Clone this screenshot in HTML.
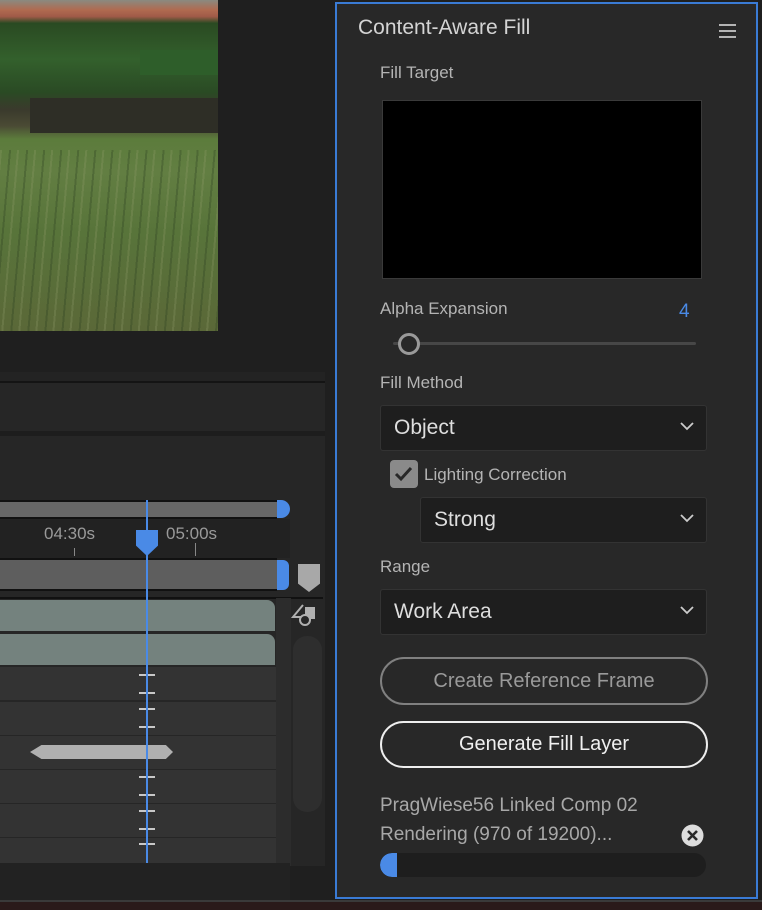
<!DOCTYPE html>
<html><head><meta charset="utf-8"><style>
*{margin:0;padding:0;box-sizing:border-box}
body{width:762px;height:910px;background:#1f1f1f;position:relative;overflow:hidden;font-family:"Liberation Sans",sans-serif}
.a{position:absolute}
.lbl{color:#b4b4b4;font-size:17px}
.dd{background:#1e1e1e;border:1px solid #333;border-radius:3px;color:#dedede;font-size:21px;padding-left:13px;line-height:44px}
.dd svg{position:absolute;right:12px;top:16px}
.row{background:#333;height:33px;left:0;width:276px}
.ib{position:absolute;left:139px;width:16px;height:20px;border-top:2px solid #c8c8c8;border-bottom:2px solid #c8c8c8}
</style></head><body>
<!-- image -->
<div class="a" style="left:0;top:0;width:218px;height:331px;background:linear-gradient(180deg,#8a8a80 0,#b06a50 3%,#a05a48 5%,#2a4a22 7%,#33602c 18%,#2a4a24 28%,#3a3a2c 33%,#4a4a34 38%,#5c7c3c 42%,#627e42 52%,#58743a 70%,#5a6838 100%)"></div>
<div class="a" style="left:140px;top:50px;width:78px;height:25px;background:#2e5e2a"></div>
<div class="a" style="left:30px;top:98px;width:188px;height:35px;background:#2e2e26"></div>
<div class="a" style="left:0;top:150px;width:218px;height:181px;background:repeating-linear-gradient(95deg,rgba(150,160,110,.25) 0 2px,transparent 2px 9px,rgba(40,60,30,.3) 9px 11px,transparent 11px 17px)"></div>
<div class="a" style="left:0;top:372px;width:325px;height:9px;background:#232323"></div>
<div class="a" style="left:0;top:381px;width:325px;height:2px;background:#141414"></div>
<div class="a" style="left:0;top:383px;width:325px;height:48px;background:#262626"></div>
<div class="a" style="left:0;top:431px;width:325px;height:5px;background:#1d1d1d"></div>
<div class="a" style="left:0;top:436px;width:325px;height:430px;background:#262626"></div>
<!-- timeline -->
<div class="a" style="left:0;top:500px;width:277px;height:19px;background:#676767;border-top:2px solid #111;border-bottom:2px solid #111"></div>
<div class="a" style="left:277px;top:500px;width:13px;height:18px;background:#4a8ae6;border-radius:0 9px 9px 0"></div>
<div class="a" style="left:0;top:519px;width:290px;height:39px;background:#222"></div>
<div class="a" style="left:44px;top:524px;color:#9a9a9a;font-size:17px">04:30s</div>
<div class="a" style="left:166px;top:524px;color:#9a9a9a;font-size:17px">05:00s</div>
<div class="a" style="left:74px;top:548px;width:1px;height:8px;background:#888"></div>
<div class="a" style="left:195px;top:543px;width:1px;height:13px;background:#888"></div>
<div class="a" style="left:0;top:558px;width:277px;height:33px;background:#5e5e5e;border-top:2px solid #111;border-bottom:2px solid #111"></div>
<div class="a" style="left:277px;top:560px;width:12px;height:30px;background:#4a8ae6;border-radius:0 6px 6px 0"></div>
<div class="a" style="left:0;top:597px;width:323px;height:2px;background:#111"></div>
<div class="a" style="left:0;top:600px;width:275px;height:31px;background:#74827e;border-radius:0 8px 0 0"></div>
<div class="a" style="left:0;top:634px;width:275px;height:31px;background:#74827e;border-radius:0 8px 0 0"></div>
<div class="a" style="left:276px;top:598px;width:15px;height:268px;background:#2c2c2c"></div>
<div class="a row" style="top:667px"></div>
<div class="a row" style="top:702px"></div>
<div class="a row" style="top:736px"></div>
<div class="a row" style="top:770px"></div>
<div class="a row" style="top:804px"></div>
<div class="a row" style="top:838px;height:25px"></div>
<div class="a" style="left:30px;top:745px;width:143px;height:14px;background:#b0b0b0;clip-path:polygon(0 50%,8% 0,95% 0,100% 50%,95% 100%,8% 100%)"></div>
<div class="ib" style="top:674px"></div>
<div class="ib" style="top:708px"></div>
<div class="ib" style="top:776px"></div>
<div class="ib" style="top:810px"></div>
<div class="ib" style="top:843px;border-bottom:none;height:20px"></div>
<div class="a" style="left:146px;top:500px;width:2px;height:363px;background:#4a8ae6"></div>
<div class="a" style="left:136px;top:530px;width:22px;height:26px;background:#4a8ae6;clip-path:polygon(0 0,100% 0,100% 60%,50% 100%,0 60%)"></div>
<div class="a" style="left:298px;top:564px;width:22px;height:28px;background:#a8a8a8;clip-path:polygon(0 0,100% 0,100% 70%,50% 100%,0 70%)"></div>
<svg class="a" style="left:291px;top:603px" width="30" height="28"><rect x="14" y="4" width="10" height="12" fill="#b0b0b0"/><path d="M12 2L2 14h14" stroke="#b0b0b0" stroke-width="2" fill="none"/><circle cx="14" cy="17" r="5" stroke="#b0b0b0" stroke-width="2" fill="#262626"/></svg>
<div class="a" style="left:291px;top:634px;width:33px;height:232px;background:#262626"></div>
<div class="a" style="left:293px;top:636px;width:29px;height:176px;background:#2e2e2e;border-radius:14px"></div>
<div class="a" style="left:0;top:863px;width:290px;height:37px;background:#222"></div>
<div class="a" style="left:0;top:900px;width:762px;height:10px;background:#2a1a1a;border-top:2px solid #3a3a3a"></div>
<!-- panel -->
<div class="a" style="left:335px;top:2px;width:423px;height:897px;background:#282828;border:2px solid #3a7bd5"></div>
<div class="a" style="left:358px;top:16px;color:#d4d4d4;font-size:21px">Content-Aware Fill</div>
<svg class="a" style="left:719px;top:24px" width="18" height="14"><path d="M0 1h17M0 7h17M0 13h17" stroke="#c8c8c8" stroke-width="1.8"/></svg>
<div class="a lbl" style="left:380px;top:63px">Fill Target</div>
<div class="a" style="left:382px;top:100px;width:320px;height:179px;background:#000;border:1px solid #3a3a3a"></div>
<div class="a lbl" style="left:380px;top:299px">Alpha Expansion</div>
<div class="a" style="left:679px;top:301px;color:#4a8ae6;font-size:19px">4</div>
<div class="a" style="left:393px;top:342px;width:303px;height:3px;background:#474747;border-radius:2px"></div>
<div class="a" style="left:398px;top:333px;width:22px;height:22px;border:3px solid #9a9a9a;border-radius:50%;background:#282828"></div>
<div class="a lbl" style="left:380px;top:373px">Fill Method</div>
<div class="a dd" style="left:380px;top:405px;width:327px;height:46px">Object<svg width="14" height="9"><path d="M1 1l6 6 6-6" stroke="#ccc" stroke-width="1.8" fill="none"/></svg></div>
<div class="a" style="left:390px;top:460px;width:28px;height:28px;background:#8a8a8a;border-radius:4px"></div>
<svg class="a" style="left:394px;top:465px" width="20" height="18"><path d="M2 9l5 5 10-11" stroke="#282828" stroke-width="3" fill="none"/></svg>
<div class="a lbl" style="left:424px;top:465px">Lighting Correction</div>
<div class="a dd" style="left:420px;top:497px;width:287px;height:46px">Strong<svg width="14" height="9"><path d="M1 1l6 6 6-6" stroke="#ccc" stroke-width="1.8" fill="none"/></svg></div>
<div class="a lbl" style="left:380px;top:557px">Range</div>
<div class="a dd" style="left:380px;top:589px;width:327px;height:46px">Work Area<svg width="14" height="9"><path d="M1 1l6 6 6-6" stroke="#ccc" stroke-width="1.8" fill="none"/></svg></div>
<div class="a" style="left:380px;top:657px;width:328px;height:48px;border:2px solid #808080;border-radius:24px;color:#9a9a9a;font-size:20px;text-align:center;line-height:44px">Create Reference Frame</div>
<div class="a" style="left:380px;top:721px;width:328px;height:47px;border:2px solid #eee;border-radius:24px;color:#f0f0f0;font-size:20px;text-align:center;line-height:43px">Generate Fill Layer</div>
<div class="a" style="left:380px;top:795px;color:#a8a8a8;font-size:19px">PragWiese56 Linked Comp 02</div>
<div class="a" style="left:380px;top:824px;color:#a8a8a8;font-size:19px">Rendering (970 of 19200)...</div>
<svg class="a" style="left:681px;top:824px" width="23" height="23"><circle cx="11.5" cy="11.5" r="11" fill="#ddd"/><path d="M7 7l9 9M16 7l-9 9" stroke="#282828" stroke-width="2.6"/></svg>
<div class="a" style="left:380px;top:853px;width:326px;height:24px;background:#1e1e1e;border-radius:12px;overflow:hidden"><div style="width:17px;height:24px;background:#4a8ae6;border-radius:12px 0 0 12px"></div></div>
</body></html>
